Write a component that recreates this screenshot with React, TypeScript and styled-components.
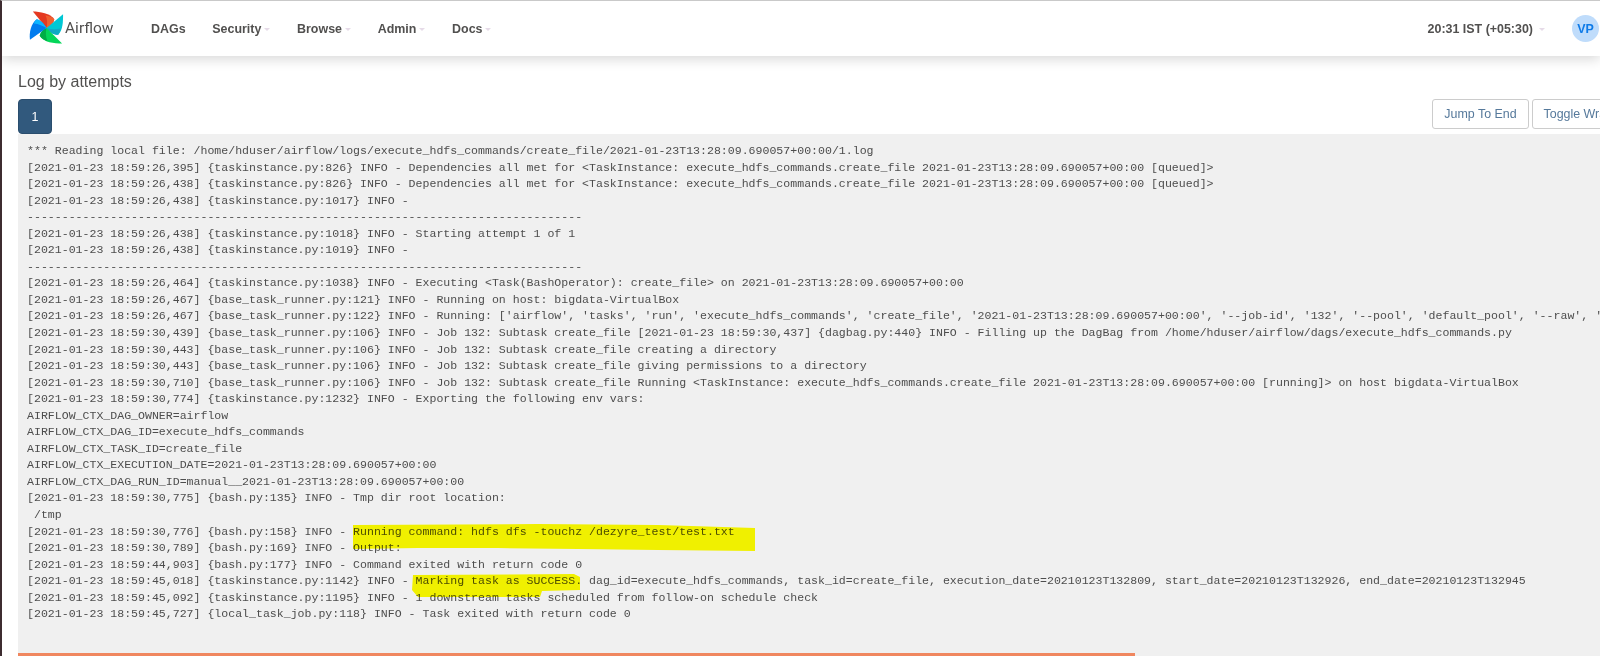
import React from "react";
import styled, { createGlobalStyle } from "styled-components";

const Global = createGlobalStyle`
  html, body { margin: 0; padding: 0; background: #fff; overflow: hidden; height: 656px; }
  #root { height: 656px; }
`;

const Page = styled.div`
  position: relative;
  box-sizing: border-box;
  width: 1600px;
  height: 656px;
  overflow: hidden;
  border-left: 2px solid #3d2c30;
  border-top: 1px solid #c9c9c9;
  background: #fff;
  font-family: "Liberation Sans", Arial, sans-serif;
  font-size: 12.44px;
  color: #51504f;
  display: flex;
  flex-direction: column;
`;

const NavBar = styled.header`
  height: 55px;
  flex: none;
  background: #fff;
  box-shadow: 0 3px 12px rgba(0, 0, 0, 0.16);
  display: flex;
  align-items: center;
  padding-left: 26px;
  position: relative;
  z-index: 2;
`;

const Brand = styled.div`
  width: 123px;
  display: flex;
  align-items: center;
  flex: none;
  margin-top: -2px;
`;

const BrandName = styled.span`
  font-family: Roboto, "Liberation Sans", sans-serif;
  font-size: 15.5px;
  color: #51504f;
`;

const NavItems = styled.nav`
  display: flex;
  align-items: center;
  gap: 26.7px;
`;

const NavItem = styled.span`
  font-weight: 700;
  color: #51504f;
  display: inline-flex;
  align-items: center;
`;

const Caret = styled.i`
  display: inline-block;
  width: 0;
  height: 0;
  margin-left: 3px;
  margin-top: 2px;
  border-top: 3px solid #e6dbe8;
  border-left: 3px solid transparent;
  border-right: 3px solid transparent;
`;

const ClockCaret = styled(Caret)`
  margin-left: 6px;
`;

const NavRight = styled.div`
  margin-left: auto;
  display: flex;
  align-items: center;
`;

const Clock = styled(NavItem)`
  margin-right: 27px;
`;

const Avatar = styled.span`
  width: 27px;
  height: 27px;
  border-radius: 50%;
  background: #bfdcfb;
  color: #0f7be8;
  font-weight: 700;
  display: inline-flex;
  align-items: center;
  justify-content: center;
  margin-right: 1px;
`;

const Main = styled.main`
  flex: 1;
  min-height: 0;
  padding: 0 0 0 16px;
  display: flex;
  flex-direction: column;
`;

const Title = styled.h4`
  margin: 16px 0 0;
  height: 27px;
  font-size: 16px;
  line-height: 20px;
  font-weight: 400;
  color: #51504f;
`;

const ToolRow = styled.div`
  display: flex;
  justify-content: space-between;
  align-items: flex-start;
  height: 35px;
  flex: none;
  width: 1607px;
`;

const Attempt = styled.span`
  box-sizing: border-box;
  width: 34px;
  height: 35px;
  background: #31597d;
  border: 1px solid #2a4d6d;
  border-radius: 4px;
  color: #fff;
  display: flex;
  align-items: center;
  justify-content: center;
`;

const Actions = styled.div`
  display: flex;
  gap: 3px;
`;

const ActionButton = styled.span`
  box-sizing: border-box;
  height: 30px;
  padding: 0 10.9px;
  background: #fff;
  border: 1px solid #ccc;
  border-radius: 3px;
  color: #56799b;
  font-size: 12.44px;
  white-space: nowrap;
  display: flex;
  align-items: center;
`;

const LogPanel = styled.div`
  position: relative;
  flex: 1;
  min-height: 0;
  background: #f0f0f0;
  overflow: hidden;
  display: flex;
  flex-direction: column;
`;

const LogText = styled.pre`
  margin: 0;
  padding: 9px 0 0 9px;
  flex: 1;
  min-height: 0;
  font-family: "Liberation Mono", monospace;
  font-size: 11.57px;
  line-height: 16.54px;
  color: #4d4d4d;
  white-space: pre;
`;

const Progress = styled.div`
  width: 1117px;
  height: 3px;
  background: #f0875f;
  flex: none;
`;

const Marker = styled.svg`
  position: absolute;
  left: 0;
  top: 0;
  width: 1100px;
  height: 520px;
  mix-blend-mode: multiply;
  pointer-events: none;
`;

const LOG = `*** Reading local file: /home/hduser/airflow/logs/execute_hdfs_commands/create_file/2021-01-23T13:28:09.690057+00:00/1.log
[2021-01-23 18:59:26,395] {taskinstance.py:826} INFO - Dependencies all met for <TaskInstance: execute_hdfs_commands.create_file 2021-01-23T13:28:09.690057+00:00 [queued]>
[2021-01-23 18:59:26,438] {taskinstance.py:826} INFO - Dependencies all met for <TaskInstance: execute_hdfs_commands.create_file 2021-01-23T13:28:09.690057+00:00 [queued]>
[2021-01-23 18:59:26,438] {taskinstance.py:1017} INFO - 
--------------------------------------------------------------------------------
[2021-01-23 18:59:26,438] {taskinstance.py:1018} INFO - Starting attempt 1 of 1
[2021-01-23 18:59:26,438] {taskinstance.py:1019} INFO - 
--------------------------------------------------------------------------------
[2021-01-23 18:59:26,464] {taskinstance.py:1038} INFO - Executing <Task(BashOperator): create_file> on 2021-01-23T13:28:09.690057+00:00
[2021-01-23 18:59:26,467] {base_task_runner.py:121} INFO - Running on host: bigdata-VirtualBox
[2021-01-23 18:59:26,467] {base_task_runner.py:122} INFO - Running: ['airflow', 'tasks', 'run', 'execute_hdfs_commands', 'create_file', '2021-01-23T13:28:09.690057+00:00', '--job-id', '132', '--pool', 'default_pool', '--raw', '--subdir', 'DAGS_FOLDER/execute_hdfs_commands.py']
[2021-01-23 18:59:30,439] {base_task_runner.py:106} INFO - Job 132: Subtask create_file [2021-01-23 18:59:30,437] {dagbag.py:440} INFO - Filling up the DagBag from /home/hduser/airflow/dags/execute_hdfs_commands.py
[2021-01-23 18:59:30,443] {base_task_runner.py:106} INFO - Job 132: Subtask create_file creating a directory
[2021-01-23 18:59:30,443] {base_task_runner.py:106} INFO - Job 132: Subtask create_file giving permissions to a directory
[2021-01-23 18:59:30,710] {base_task_runner.py:106} INFO - Job 132: Subtask create_file Running <TaskInstance: execute_hdfs_commands.create_file 2021-01-23T13:28:09.690057+00:00 [running]> on host bigdata-VirtualBox
[2021-01-23 18:59:30,774] {taskinstance.py:1232} INFO - Exporting the following env vars:
AIRFLOW_CTX_DAG_OWNER=airflow
AIRFLOW_CTX_DAG_ID=execute_hdfs_commands
AIRFLOW_CTX_TASK_ID=create_file
AIRFLOW_CTX_EXECUTION_DATE=2021-01-23T13:28:09.690057+00:00
AIRFLOW_CTX_DAG_RUN_ID=manual__2021-01-23T13:28:09.690057+00:00
[2021-01-23 18:59:30,775] {bash.py:135} INFO - Tmp dir root location: 
 /tmp
[2021-01-23 18:59:30,776] {bash.py:158} INFO - Running command: hdfs dfs -touchz /dezyre_test/test.txt
[2021-01-23 18:59:30,789] {bash.py:169} INFO - Output:
[2021-01-23 18:59:44,903] {bash.py:177} INFO - Command exited with return code 0
[2021-01-23 18:59:45,018] {taskinstance.py:1142} INFO - Marking task as SUCCESS. dag_id=execute_hdfs_commands, task_id=create_file, execution_date=20210123T132809, start_date=20210123T132926, end_date=20210123T132945
[2021-01-23 18:59:45,092] {taskinstance.py:1195} INFO - 1 downstream tasks scheduled from follow-on schedule check
[2021-01-23 18:59:45,727] {local_task_job.py:118} INFO - Task exited with return code 0`;

const Pinwheel = () => (
  <svg width="37" height="38" viewBox="0 0 38 38" aria-hidden="true">
    <path d="M5 2 C12 2 23 4 27 10 C26 15 22 18 19 19 Z" fill="#e43921" />
    <path d="M19 19 C22 18 26 15 27 10 C25 8 22 7 18 6 C20 10 20 15 19 19Z" fill="#f0602f" />
    <path d="M36 5 C36 12 36 21 31 26 C26 26 21 23 19 19 Z" fill="#00c7d4" />
    <path d="M19 19 C21 23 26 26 31 26 C32 24.5 33 22 33.5 19.5 C28 20.5 23 20.5 19 19Z" fill="#11a9c4" />
    <path d="M35 35 C27 35 16 34 12 27 C13 23 16 20 19 19 Z" fill="#04d659" />
    <path d="M19 19 C16 20 13 23 12 27 C14 30 17 31.5 20 32.5 C18 28 18 23 19 19Z" fill="#00ad46" />
    <path d="M2 31 C1 24 3 14 9 10 C13 11 17 15 19 19 Z" fill="#017cee" />
    <path d="M19 19 C17 15 13 11 9 10 C7.5 11 6.5 13 6 14.5 C11 15 15.5 17 19 19Z" fill="#0cb6ff" />
  </svg>
);

const NAV = [
  { label: "DAGs", caret: false },
  { label: "Security", caret: true },
  { label: "Browse", caret: true },
  { label: "Admin", caret: true },
  { label: "Docs", caret: true },
];

export default function App() {
  return (
    <Page>
      <Global />
      <NavBar>
        <Brand>
          <Pinwheel />
          <BrandName>Airflow</BrandName>
        </Brand>
        <NavItems>
          {NAV.map((n) => (
            <NavItem key={n.label}>
              {n.label}
              {n.caret && <Caret />}
            </NavItem>
          ))}
        </NavItems>
        <NavRight>
          <Clock>
            20:31 IST (+05:30)
            <ClockCaret />
          </Clock>
          <Avatar>VP</Avatar>
        </NavRight>
      </NavBar>
      <Main>
        <Title>Log by attempts</Title>
        <ToolRow>
          <Attempt>1</Attempt>
          <Actions>
            <ActionButton>Jump To End</ActionButton>
            <ActionButton>Toggle Wrap</ActionButton>
          </Actions>
        </ToolRow>
        <LogPanel>
          <LogText>{LOG}</LogText>
          <Progress />
          <Marker viewBox="0 0 1100 520">
            <path
              d="M335 391 L520 390 L640 391 L737 394 L737 417 L640 416 L560 415 L480 414 L400 414 L335 415Z"
              fill="#ffff00"
            />
            <path d="M395 441 L556 440 L562 443 L562 456 L524 457 L522 463 L400 463 L394 456Z" fill="#ffff00" />
          </Marker>
        </LogPanel>
      </Main>
    </Page>
  );
}
